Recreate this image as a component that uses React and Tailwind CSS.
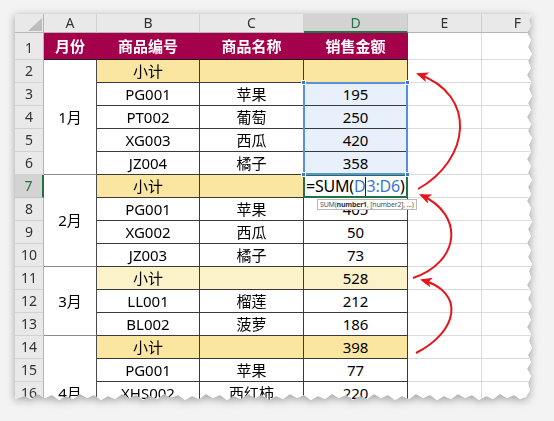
import React, { Fragment } from "react";

const rows = [
  { n: 2, t: "sub", b: "小计", c: "", d: "" },
  { n: 3, b: "PG001", c: "苹果", d: "195", sel: "top" },
  { n: 4, b: "PT002", c: "葡萄", d: "250", sel: "mid" },
  { n: 5, b: "XG003", c: "西瓜", d: "420", sel: "mid" },
  { n: 6, b: "JZ004", c: "橘子", d: "358", sel: "mid" },
  { n: 7, t: "sub", b: "小计", c: "", d: "", formula: true },
  { n: 8, b: "PG001", c: "苹果", d: "405" },
  { n: 9, b: "XG002", c: "西瓜", d: "50" },
  { n: 10, b: "JZ003", c: "橘子", d: "73" },
  { n: 11, t: "subl", b: "小计", c: "", d: "528" },
  { n: 12, b: "LL001", c: "榴莲", d: "212" },
  { n: 13, b: "BL002", c: "菠萝", d: "186" },
  { n: 14, t: "sub", b: "小计", c: "", d: "398" },
  { n: 15, b: "PG001", c: "苹果", d: "77" },
  { n: 16, b: "XHS002", c: "西红柿", d: "220" },
  { n: 17, b: "", c: "", d: "" },
  { n: 18, b: "", c: "", d: "" },
];

const months = {
  2: { t: "1月", span: "row-span-5" },
  7: { t: "2月", span: "row-span-4" },
  11: { t: "3月", span: "row-span-3" },
  14: { t: "4月", span: "row-span-5" },
};

function bgFor(t, sel) {
  if (t === "sub") return "bg-[#fae6a0]";
  if (t === "subl") return "bg-[#fcf2ca]";
  if (sel) return "bg-[#e8f0fb]";
  return "bg-white";
}

function RowHead({ n, active }) {
  if (active)
    return (
      <div className="flex items-end justify-center bg-[#d3d3d3] border-b border-b-[#c4c4c4] border-r-2 border-r-[#217346] text-[14px] leading-none pb-[4px] text-[#217346]">
        {n}
      </div>
    );
  return (
    <div className="flex items-end justify-center bg-[#e9e9e9] border-b border-b-[#d2d2d2] border-r border-r-[#b5b5b5] text-[14px] leading-none pb-[4px] text-[#333]">
      {n}
    </div>
  );
}

function ColHead({ l, active }) {
  if (active)
    return (
      <div className="flex items-center justify-center bg-[#d3d3d3] border-r border-r-[#c8c8c8] border-b-2 border-b-[#217346] text-[14px] leading-none text-[#217346]">
        {l}
      </div>
    );
  return (
    <div className="flex items-center justify-center bg-[#e9e9e9] border-r border-r-[#cfcfcf] border-b border-b-[#b5b5b5] text-[14px] leading-none text-[#333]">
      {l}
    </div>
  );
}

function Cell({ bg, children }) {
  return (
    <div className={`${bg} flex items-center justify-center border-r border-b border-[#3a3a3a] text-[15px] leading-none text-black`}>
      {children}
    </div>
  );
}

function Blank() {
  return <div className="bg-white border-r border-b border-[#dcdcdc]" />;
}

function HeadCell({ children }) {
  return (
    <div className="flex items-center justify-center bg-[#a5004c] border-r border-r-[#a5004c] border-b border-b-[#1e1e1e] text-[15px] font-bold leading-none text-white">
      {children}
    </div>
  );
}

function DCell({ r }) {
  if (r.formula) {
    return (
      <div className="relative flex items-center bg-white border-r border-b border-[#3a3a3a] pl-[2px] text-[16px] tracking-[-0.2px] leading-none text-black whitespace-nowrap">
        <span>=SUM(</span>
        <span className="text-[#3c78d0]">D</span>
        <span className="inline-block w-px h-[19px] bg-[#222]" />
        <span className="text-[#3c78d0]">3:D6</span>
        <span>)</span>
        <div className="absolute -left-px -top-px w-[105px] h-[24px] border-2 border-[#217346] z-[11]" />
        <div className="absolute left-[13px] top-[24px] z-30 bg-white border border-[#b8b8b8] px-[2px] text-[7px] tracking-[-0.2px] leading-[9px] text-[#555] whitespace-nowrap">
          SUM(<span className="font-bold text-[#333]">number1</span>, [number2], ...)
        </div>
      </div>
    );
  }
  return (
    <div className={`${bgFor(r.t, r.sel)} relative flex items-center justify-center border-r border-b border-[#3a3a3a] text-[15px] leading-none text-black`}>
      {r.d}
      {r.sel === "top" && (
        <div className="absolute -left-px -top-px w-[105px] h-[93px] border-2 border-[#5a8fdb] z-[12]">
          <div className="absolute -left-[4px] -top-[4px] w-[5px] h-[5px] bg-[#3f77d0] border border-white" />
          <div className="absolute -right-[4px] -top-[4px] w-[5px] h-[5px] bg-[#3f77d0] border border-white" />
          <div className="absolute -left-[4px] -bottom-[4px] w-[5px] h-[5px] bg-[#3f77d0] border border-white" />
          <div className="absolute -right-[4px] -bottom-[4px] w-[5px] h-[5px] bg-[#3f77d0] border border-white" />
        </div>
      )}
    </div>
  );
}

export default function App() {
  return (
    <div className="relative w-[554px] h-[421px] overflow-hidden bg-[#f3f3f3] pl-[15px] pt-[14px] font-['Noto_Sans','Noto_Sans_CJK_SC',sans-serif]">
      <div className="w-[517px] h-[386px] drop-shadow-[0_2px_4px_rgba(0,0,0,0.35)]">
        <div className="w-[517px] h-[386px] overflow-hidden bg-white [clip-path:polygon(0_0,517px_0,514px_6px,516px_12px,512px_19px,516px_26px,513px_33px,517px_40px,513px_47px,516px_54px,512px_61px,516px_68px,514px_75px,517px_82px,513px_89px,516px_96px,512px_103px,516px_110px,513px_117px,517px_124px,514px_131px,516px_138px,512px_145px,516px_152px,513px_159px,517px_166px,513px_173px,516px_180px,512px_187px,516px_194px,514px_201px,517px_208px,513px_215px,516px_222px,512px_229px,516px_236px,513px_243px,517px_250px,514px_257px,516px_264px,512px_271px,516px_278px,513px_285px,517px_292px,513px_299px,516px_306px,512px_313px,516px_320px,514px_327px,517px_334px,513px_341px,516px_348px,512px_355px,516px_362px,513px_369px,515px_376px,511px_383px,505px_385px,499px_381px,492px_384px,485px_380px,478px_385px,471px_382px,464px_386px,457px_381px,450px_384px,443px_380px,436px_385px,429px_382px,422px_386px,415px_381px,408px_384px,401px_380px,394px_385px,387px_382px,380px_386px,373px_381px,366px_384px,359px_380px,352px_385px,345px_382px,338px_386px,331px_381px,324px_384px,317px_380px,310px_385px,303px_382px,296px_386px,289px_381px,282px_384px,275px_380px,268px_385px,261px_382px,254px_386px,247px_381px,240px_384px,233px_380px,226px_385px,219px_382px,212px_386px,205px_381px,198px_384px,191px_380px,184px_385px,177px_382px,170px_386px,163px_381px,156px_384px,149px_380px,142px_385px,135px_382px,128px_386px,121px_381px,114px_384px,107px_380px,100px_385px,93px_382px,86px_386px,79px_381px,72px_384px,65px_380px,58px_385px,51px_382px,44px_386px,37px_381px,30px_384px,23px_380px,16px_385px,9px_382px,0_385px)]">
          <div className="grid w-[539px] grid-cols-[29px_53px_103px_104px_104px_74px_72px] grid-rows-[19px_27px_repeat(17,23px)]">
            <div className="relative bg-[#e9e9e9] border-r border-b border-[#b5b5b5]">
              <svg className="absolute left-0 top-0" width="29" height="19" viewBox="0 0 29 19">
                <polygon points="13,17 27,17 27,4" fill="#bdbdbd" />
              </svg>
            </div>
            <ColHead l="A" />
            <ColHead l="B" />
            <ColHead l="C" />
            <ColHead l="D" active />
            <ColHead l="E" />
            <ColHead l="F" />

            <RowHead n={1} />
            <HeadCell>月份</HeadCell>
            <HeadCell>商品编号</HeadCell>
            <HeadCell>商品名称</HeadCell>
            <HeadCell>销售金额</HeadCell>
            <Blank />
            <Blank />

            {rows.map((r) => (
              <Fragment key={r.n}>
                <RowHead n={r.n} active={r.n === 7} />
                {months[r.n] && (
                  <div className={`${months[r.n].span} flex items-center justify-center bg-white border-r border-r-[#4a4a4a] border-b border-b-[#8a8a8a] text-[15px] leading-none text-black`}>
                    {months[r.n].t}
                  </div>
                )}
                <Cell bg={bgFor(r.t)}>{r.b}</Cell>
                <Cell bg={bgFor(r.t)}>{r.c}</Cell>
                <DCell r={r} />
                <Blank />
                <Blank />
              </Fragment>
            ))}
          </div>
        </div>
      </div>

      <svg className="absolute left-0 top-0 pointer-events-none" width="554" height="421" viewBox="0 0 554 421">
        <defs>
          <marker id="ah" viewBox="0 0 12 10" refX="10" refY="5" markerWidth="6" markerHeight="5" orient="auto" markerUnits="strokeWidth">
            <path d="M0,0 L12,5 L0,10 L3,5 Z" fill="#e8141b" />
          </marker>
        </defs>
        <path d="M418,189 C470,160 478,95 418,74" fill="none" stroke="#e8141b" strokeWidth="2" markerEnd="url(#ah)" />
        <path d="M413,278 C460,262 465,215 421,195" fill="none" stroke="#e8141b" strokeWidth="2" markerEnd="url(#ah)" />
        <path d="M416,353 C458,332 466,292 422,280" fill="none" stroke="#e8141b" strokeWidth="2" markerEnd="url(#ah)" />
      </svg>
    </div>
  );
}
